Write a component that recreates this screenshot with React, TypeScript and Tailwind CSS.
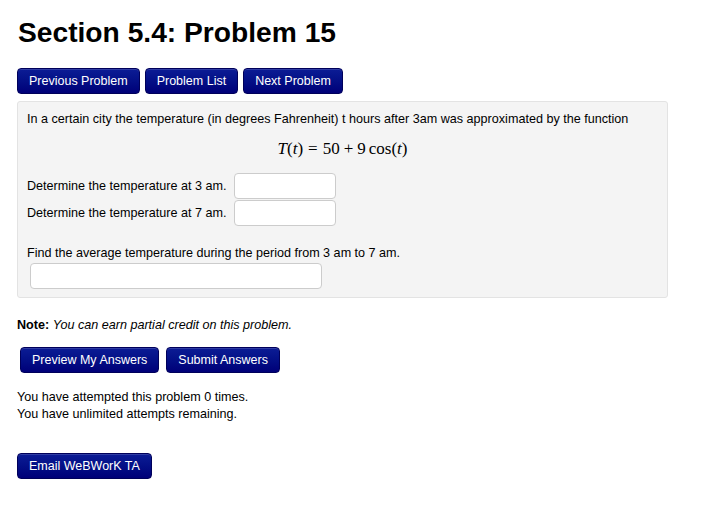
import React from 'react';

const btn =
  'h-[26px] px-[11px] rounded-[4px] border border-[#00005a] bg-gradient-to-b from-[#0c1c95] to-[#000078] text-white text-[12.5px] leading-none shadow-[inset_0_1px_0_rgba(255,255,255,0.15)]';

const inputCls = 'h-[26px] bg-white border border-[#cccccc] rounded-[4px]';

export default function App() {
  return (
    <div className="min-h-screen bg-white text-black font-['Liberation_Sans',Arial,sans-serif] text-[12.6px] pl-[17px] pt-[15px]">
      <h1 className="text-[28.2px] font-bold leading-[34px] pl-[1px]">Section 5.4: Problem 15</h1>

      <div className="flex gap-[5px] mt-[19px]">
        <button className={btn}>Previous Problem</button>
        <button className={btn}>Problem List</button>
        <button className={btn}>Next Problem</button>
      </div>

      <div className="w-[651px] mt-[7px] bg-[#f4f4f4] border border-[#e3e3e3] rounded-[3px] px-[9px] pt-[9px] pb-[8px]">
        <p className="leading-[17px]">
          In a certain city the temperature (in degrees Fahrenheit) t hours after 3am was approximated by the function
        </p>
        <div className="text-center font-['Liberation_Serif','Times_New_Roman',serif] text-[17px] mt-[12px] leading-[18px]">
          <i>T</i>(<i>t</i>)<span className="mx-[5px]">=</span>50<span className="mx-[4px]">+</span>9<span className="ml-[3px]">cos</span>(<i>t</i>)
        </div>
        <div className="mt-[15px] flex items-center gap-[7px]">
          <span>Determine the temperature at 3 am.</span>
          <div className={`${inputCls} w-[102px]`} />
        </div>
        <div className="mt-[1px] flex items-center gap-[7px]">
          <span>Determine the temperature at 7 am.</span>
          <div className={`${inputCls} w-[102px]`} />
        </div>
        <p className="mt-[19px] leading-[17px]">Find the average temperature during the period from 3 am to 7 am.</p>
        <div className={`${inputCls} w-[292px] ml-[3px] mt-[1px]`} />
      </div>

      <p className="mt-[19px] leading-[17px]">
        <b>Note:</b> <i>You can earn partial credit on this problem.</i>
      </p>

      <div className="flex gap-[7px] mt-[13px] ml-[3px]">
        <button className={btn}>Preview My Answers</button>
        <button className={btn}>Submit Answers</button>
      </div>

      <div className="mt-[16px] leading-[17px]">
        <p>You have attempted this problem 0 times.</p>
        <p>You have unlimited attempts remaining.</p>
      </div>

      <button className={`${btn} mt-[30px]`}>Email WeBWorK TA</button>
    </div>
  );
}
